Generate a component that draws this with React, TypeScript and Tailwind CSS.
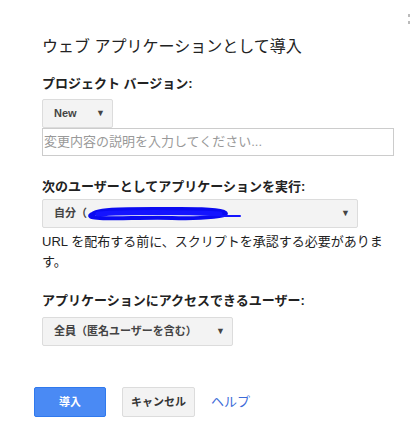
import React from "react";

const font = {
  fontFamily: '"Liberation Sans", "Noto Sans CJK JP", sans-serif',
};

function Arrow() {
  return <span className="text-[9px] leading-none text-[#444]">▼</span>;
}

function Select({ label, width, children }: { label?: string; width: string; children?: React.ReactNode }) {
  return (
    <div
      className={`${width} h-[29px] flex items-center justify-between pl-[11px] pr-[7px] border border-[#dcdcdc] rounded-[2px] bg-[#f3f3f3] text-[11px] font-bold text-[#444]`}
    >
      <span className="flex items-center">
        {label}
        {children}
      </span>
      <Arrow />
    </div>
  );
}

// blue marker scribble over the e-mail address
function Scribble() {
  return (
    <svg width="158" height="16" viewBox="0 0 158 16" className="-ml-[3px]">
      <path
        d="M8 9 C 8 3, 40 3, 70 3 S 128 2, 140 6 C 150 10, 120 13, 88 12 S 18 14, 8 11 C 2 9, 10 6, 36 6 L 126 7"
        fill="none"
        stroke="#0a0af0"
        strokeWidth="4"
        strokeLinecap="round"
      />
      <path d="M14 8 C 40 6, 100 6, 136 8" fill="none" stroke="#1414ff" strokeWidth="5" strokeLinecap="round" />
      <path d="M138 10 L 156 10" fill="none" stroke="#1414ff" strokeWidth="2" strokeLinecap="round" />
    </svg>
  );
}

export default function App() {
  return (
    <div className="w-[410px] h-[435px] bg-white relative" style={font}>
      <div className="absolute right-0 top-[14px] w-[2px] h-[3px] bg-[#bbb]" />
      <div className="absolute right-0 top-[21px] w-[2px] h-[3px] bg-[#bbb]" />
      <div className="pl-[42px] pt-[36px]">
        <h1 className="text-[16px] leading-[22px] text-[#222]">ウェブ アプリケーションとして導入</h1>

        <div className="mt-[17px] text-[13px] leading-[17px] font-bold text-[#222]">プロジェクト バージョン:</div>
        <div className="mt-[7px]">
          <Select label="New" width="w-[71px]" />
        </div>
        <div className="w-[352px] h-[28px] border border-[#ccc] flex items-center px-[1px] text-[13px] text-[#999]">
          変更内容の説明を入力してください...
        </div>

        <div className="mt-[22px] text-[13px] leading-[17px] font-bold text-[#222]">
          次のユーザーとしてアプリケーションを実行:
        </div>
        <div className="mt-[4px]">
          <Select label="自分（" width="w-[316px]">
            <Scribble />
          </Select>
        </div>
        <p className="mt-[4px] w-[352px] text-[13px] leading-[20px] text-[#222]">
          URL を配布する前に、スクリプトを承認する必要があります。
        </p>

        <div className="mt-[20px] text-[13px] leading-[17px] font-bold text-[#222]">
          アプリケーションにアクセスできるユーザー:
        </div>
        <div className="mt-[8px]">
          <Select label="全員（匿名ユーザーを含む）" width="w-[191px]" />
        </div>
      </div>

      <div className="flex items-center pl-[34px] mt-[41px]">
        <button className="w-[72px] h-[30px] rounded-[2px] border border-[#3079ed] bg-[#4a8af4] text-white text-[11px] font-bold">
          導入
        </button>
        <button className="ml-[16px] w-[73px] h-[30px] rounded-[2px] border border-[#dcdcdc] bg-[#f3f3f3] text-[#333] text-[11px] font-bold">
          キャンセル
        </button>
        <a className="ml-[16px] text-[13px] text-[#3c6bd8]">ヘルプ</a>
      </div>
    </div>
  );
}
